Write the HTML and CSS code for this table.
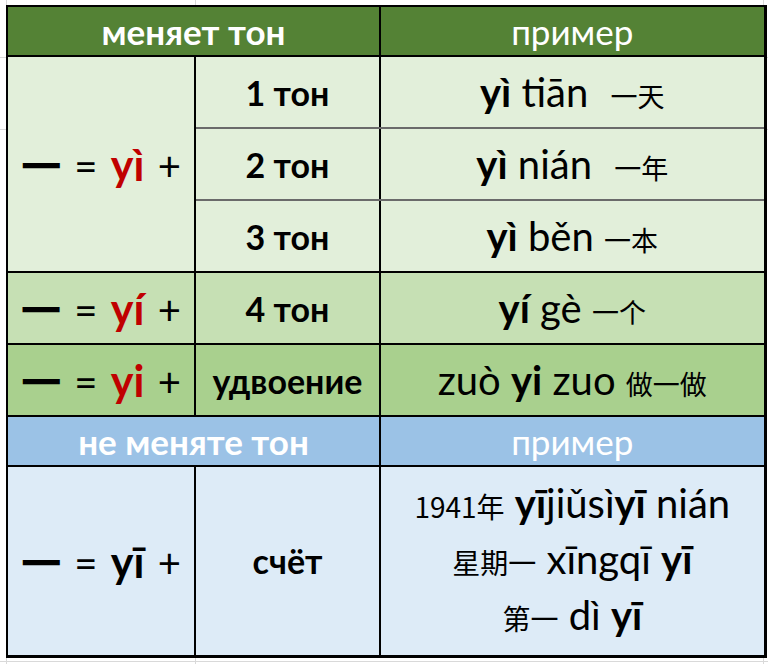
FILE: index.html
```html
<!DOCTYPE html>
<html lang="ru">
<head>
<meta charset="utf-8">
<title>Тоны 一</title>
<link rel="stylesheet" href="styles.css">
</head>
<body>
<table class="tbl">
  <colgroup>
    <col class="c1">
    <col class="c2">
    <col class="c3">
  </colgroup>
  <tr class="row-head green-head">
    <th colspan="2" class="head-bold">меняет тон</th>
    <th class="head-light">пример</th>
  </tr>
  <tr class="row-std light-green">
    <td rowspan="3" class="formula"><span class="yi-char">一</span> = <b class="red">yì</b> +</td>
    <td class="tone thin-b">1 тон</td>
    <td class="ex thin-b"><b>yì</b> tiān <span class="cjk gap">一天</span></td>
  </tr>
  <tr class="row-std light-green">
    <td class="tone thin-b thin-t">2 тон</td>
    <td class="ex thin-b thin-t"><b>yì</b> nián <span class="cjk gap">一年</span></td>
  </tr>
  <tr class="row-std light-green">
    <td class="tone thin-t">3 тон</td>
    <td class="ex thin-t"><b>yì</b> běn <span class="cjk">一本</span></td>
  </tr>
  <tr class="row-std mid-green">
    <td class="formula"><span class="yi-char">一</span> = <b class="red">yí</b> +</td>
    <td class="tone">4 тон</td>
    <td class="ex"><b>yí</b> gè <span class="cjk">一个</span></td>
  </tr>
  <tr class="row-std dark-green">
    <td class="formula"><span class="yi-char">一</span> = <b class="red">yi</b> +</td>
    <td class="tone">удвоение</td>
    <td class="ex">zuò <b>yi</b> zuo <span class="cjk">做一做</span></td>
  </tr>
  <tr class="row-head blue-head">
    <th colspan="2" class="head-bold">не меняте тон</th>
    <th class="head-light">пример</th>
  </tr>
  <tr class="row-last light-blue">
    <td class="formula"><span class="yi-char">一</span> = <b>yī</b> +</td>
    <td class="tone">счёт</td>
    <td class="ex multi">
      <div class="line"><span class="cjk">1941年</span> <b>yī</b>jiǔsì<b>yī</b> nián</div>
      <div class="line"><span class="cjk">星期一</span> xīngqī <b>yī</b></div>
      <div class="line"><span class="cjk">第一</span> dì <b>yī</b></div>
    </td>
  </tr>
</table>
</body>
</html>
```

FILE: styles.css
```css
html, body {
  margin: 0;
  padding: 0;
}

body {
  width: 768px;
  height: 664px;
  overflow: hidden;
  background-color: #ffffff;
  background-image:
    linear-gradient(#d9d9d9, #d9d9d9),
    linear-gradient(#d9d9d9, #d9d9d9),
    linear-gradient(#d9d9d9, #d9d9d9),
    linear-gradient(#d9d9d9, #d9d9d9),
    linear-gradient(#d9d9d9, #d9d9d9),
    linear-gradient(#d9d9d9, #d9d9d9);
  background-repeat: no-repeat;
  background-size: 1px 100%, 1px 100%, 1px 100%, 100% 1px, 100% 1px, 100% 1px;
  background-position: 6px 0, 195px 0, 763px 0, 0 57px, 0 129px, 0 661px;
  font-family: "Lato", "Liberation Sans", sans-serif;
  color: #000;
}

.tbl {
  border-collapse: collapse;
  table-layout: fixed;
  margin: 5px 0 0 6px;
  width: 758px;
}

.c1 { width: 188px; }
.c2 { width: 185px; }
.c3 { width: 385px; }

.tbl th,
.tbl td {
  border: 2px solid #000;
  padding: 0;
  text-align: center;
  vertical-align: middle;
  white-space: nowrap;
}

.tbl th:last-child,
.tbl td:last-child { border-right-width: 3px; }
.tbl tr:last-child td { border-bottom-width: 3px; }

.tbl td.thin-b { border-bottom: 2px solid #6a6a6a; }
.tbl td.thin-t { border-top: 2px solid #6a6a6a; }

.row-head { height: 50px; }
.row-std { height: 72px; }
.row-last { height: 190px; }

.green-head { background: #548235; }
.blue-head { background: #9bc2e6; }
.light-green { background: #e2efda; }
.mid-green { background: #c6e0b4; }
.dark-green { background: #a9d08e; }
.light-blue { background: #ddebf7; }

.head-bold {
  color: #fff;
  font-weight: 700;
  font-size: 35px;
  padding-top: 3px;
}

.head-light {
  color: #fff;
  font-weight: 400;
  font-size: 35px;
  padding-top: 3px;
}

.formula {
  font-size: 40px;
  font-weight: 400;
  word-spacing: 3px;
  padding-right: 2px;
}

.formula b {
  font-weight: 700;
  font-size: 43px;
}

.red { color: #c00000; }

.yi-char {
  font-family: "Noto Sans CJK SC", sans-serif;
  font-weight: 700;
  font-size: 40px;
}

.tone {
  font-size: 34px;
  font-weight: 700;
}

.ex {
  font-size: 40px;
}

.ex b { font-weight: 700; }

.cjk {
  font-family: "Noto Sans CJK SC", sans-serif;
  font-size: 27px;
}

.cjk.gap {
  margin-left: 12px;
}

.multi .line {
  line-height: 53px;
}

.multi .cjk {
  font-size: 28px;
}
```
